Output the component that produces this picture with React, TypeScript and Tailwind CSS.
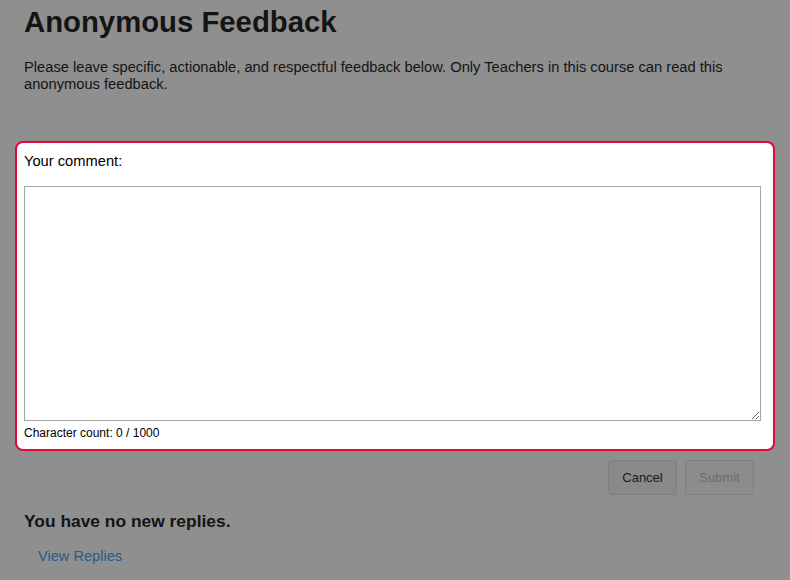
export default function App() {
  return (
    <div className="min-h-[580px] w-[790px] bg-[#8f8f8f] font-['Liberation_Sans',Arial,sans-serif] text-[#141414]">
      <div className="px-[24px] pt-[5px]">
        <h1 className="text-[29.3px] font-bold leading-[34px]">Anonymous Feedback</h1>
        <p className="mt-[20px] text-[14.7px] leading-[17px]">
          Please leave specific, actionable, and respectful feedback below. Only Teachers in this course can read this
          anonymous feedback.
        </p>
      </div>

      {/* highlighted comment box */}
      <div className="mx-[15px] mt-[48px] rounded-[8px] border-2 border-[#e3073c] bg-white px-[7px] pb-[8px] pt-[9px]">
        <label className="block text-[14.7px] leading-[18px] text-black">Your comment:</label>
        <textarea className="mt-[16px] block h-[235px] w-[737px] resize-y border border-[#a5a5a5] bg-white" />
        <div className="mt-[5px] text-[12px] leading-[15px] text-black">Character count: 0 / 1000</div>
      </div>

      <div className="mr-[36px] mt-[9px] flex justify-end gap-[8px]">
        <button className="h-[35px] w-[69px] rounded-[3px] border border-[#7f7f7f] bg-[#898989] text-[13px] text-[#1a1a1a]">
          Cancel
        </button>
        <button className="h-[35px] w-[69px] rounded-[3px] border border-[#808080] bg-[#8c8c8c] text-[13px] text-[#6c6c6c]">
          Submit
        </button>
      </div>

      <div className="px-[24px]">
        <h2 className="mt-[15px] text-[17.4px] font-bold leading-[22px]">You have no new replies.</h2>
        <a className="ml-[14px] mt-[15px] inline-block text-[14.6px] leading-[18px] text-[#2a5a86]" href="#">
          View Replies
        </a>
      </div>
    </div>
  );
}
